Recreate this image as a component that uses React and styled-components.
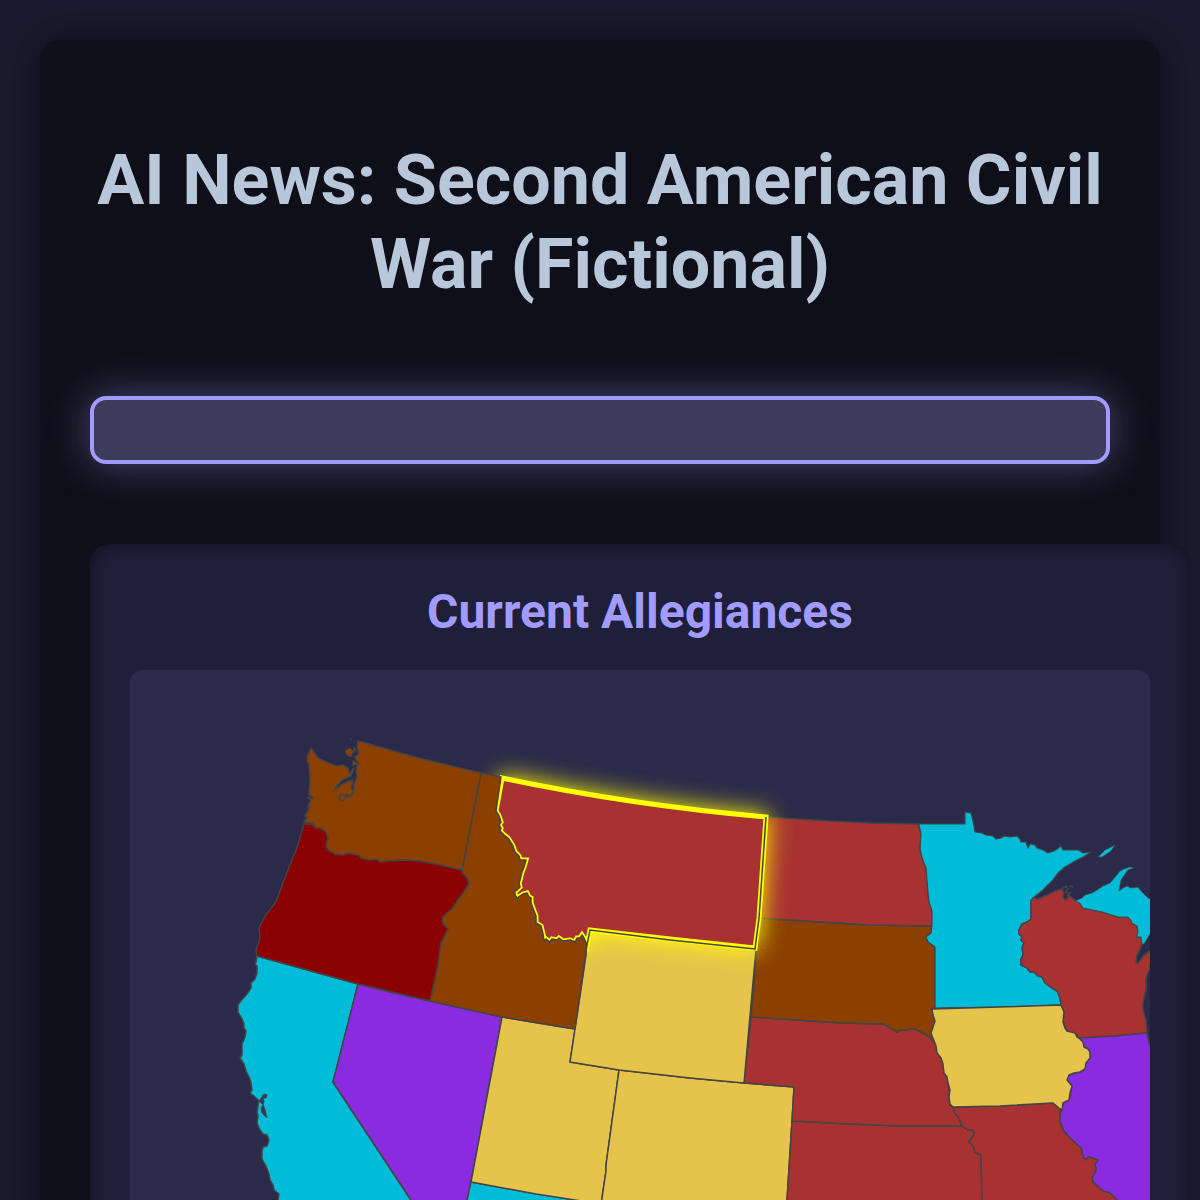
import React from "react";
import styled, { createGlobalStyle } from "styled-components";

const GlobalStyle = createGlobalStyle`
  body {
    margin: 0;
    padding: 40px;
    background: #1a1a2e;
    color: #b8c7d9;
    font-family: Roboto, "Liberation Sans", sans-serif;
  }
`;

const Container = styled.main`
  padding: 50px;
  border-radius: 20px;
  background: #0f0f1a;
  box-shadow: 0 0 40px rgba(0, 0, 0, 0.5);
`;

const Title = styled.h1`
  margin: 0;
  padding: 48px 0 90px;
  font-size: 70px;
  font-weight: 700;
  line-height: 84px;
  text-align: center;
`;

const Ticker = styled.div`
  box-sizing: border-box;
  min-height: 68px;
  margin-bottom: 80px;
  padding: 30px;
  border: 4px solid #a29bfe;
  border-radius: 16px;
  background: #3d3a5c;
  box-shadow: 0 0 40px rgba(162, 155, 254, 0.4);
`;

const MapPanel = styled.section`
  box-sizing: content-box;
  width: 100%;
  padding: 40px;
  border-radius: 20px;
  background: #1f1f3a;
  box-shadow: inset 0 0 20px rgba(0, 0, 0, 0.5);
`;

const PanelTitle = styled.h2`
  margin: 0 0 30px;
  color: #a29bfe;
  font-size: 48px;
  font-weight: 700;
  line-height: 56px;
  text-align: center;
`;

const MapFrame = styled.div`
  overflow: hidden;
  border-radius: 12px;
  background: #2c2a4a;
`;

const MapSvg = styled.svg`
  display: block;
  width: 100%;
  height: auto;
`;

const State = styled.path`
  fill: ${(p) => p.$fill};
  stroke: #444444;
  stroke-width: ${(p) => p.$line || 1.5};
  stroke-linejoin: round;
`;

const ActiveState = styled(State)`
  stroke: #ffff00;
  stroke-width: 5;
  stroke-linejoin: miter;
  filter: drop-shadow(0 0 12px #ffff00);
`;

const Border = styled.path`
  fill: none;
  stroke: #444444;
  stroke-width: 1.5;
`;

const Water = styled.path`
  fill: #2c3a50;
  stroke: #444444;
  stroke-width: 1;
`;

const cyan = "#00bcd9";
const brown = "#8b4000";
const maroon = "#8b0000";
const red = "#a83232";
const gold = "#e6c44c";
const purple = "#8a2be2";

const lowerStates = [
  {
    id: "California",
    fill: cyan,
    d: "M257 956L256 962 255 964 257 966 257 973 255 979 251 983 251 988 247 994 240 1002 238 1005 238 1012 242 1019 244 1024 244 1028 246 1031 245 1037 242 1044 242 1055 240 1058 244 1064 246 1071 250 1079 251 1083 252 1090 250 1093 255 1097 259 1101 258 1106 257 1112 258 1117 257 1123 260 1130 263 1134 267 1135 269 1140 267 1146 263 1147 262 1151 262 1159 266 1166 269 1174 270 1180 273 1185 274 1190 279 1194 278 1200 280 1210 290 1232 310 1260 330 1280H450L460 1260 411 1200 333 1082 358 984Z",
  },
  { id: "Nevada", fill: purple, d: "M358 984L394 993 430 1001 502 1017 471 1182 466 1205 455 1226 448 1255 411 1200 333 1082Z" },
  { id: "Arizona", fill: cyan, d: "M471 1182L520 1191 601 1204 590 1280H450L455 1226 466 1205Z" },
  { id: "Utah", fill: gold, d: "M502 1017L538 1023 575 1029 570 1062 619 1070 606 1165 606 1171 601 1204 536 1194 471 1182Z" },
  { id: "Colorado", fill: gold, d: "M619 1070L690 1078 744 1083 794 1087 792 1121 787 1200 784 1280H590L606 1171 606 1165Z" },
  { id: "Kansas", fill: red, d: "M792 1121L850 1124 900 1126 962 1126 968 1130 973 1130 974 1134 969 1142 973 1146 975 1152 981 1155 982 1200 983 1280H784L787 1200Z" },
  { id: "Nebraska", fill: red, d: "M751 1017L797 1020 840 1023 884 1024 892 1029 897 1032 901 1030 915 1029 927 1035 934 1041 936 1046 937 1053 941 1058 943 1064 944 1073 947 1077 948 1083 949 1089 949 1097 950 1104 953 1107 955 1113 959 1118 962 1126 900 1126 850 1124 792 1121 794 1087 744 1083Z" },
  { id: "South Dakota", fill: brown, d: "M759 918L820 922 870 925 932 926 931 933 926 937 928 942 935 947 935 1008 932 1009 933 1015 935 1021 931 1033 934 1042 927 1035 915 1029 901 1030 897 1032 892 1029 884 1024 840 1023 797 1020 751 1017Z" },
  { id: "North Dakota", fill: red, d: "M766 817L830 821 870 823 919 824 919 829 921 834 920 848 922 858 926 868 927 878 928 893 929 902 932 911 932 926 870 925 820 922 759 918Z" },
  {
    id: "Minnesota",
    fill: cyan,
    line: 1.2,
    d: "M919 824H965V812L971 813 973 821 975 832 982 833 986 835 993 836 996 839 1001 838 1004 836 1010 837 1017 836 1020 839 1021 842 1026 842 1028 848 1030 844 1035 845 1037 848 1043 850 1048 853 1054 851 1057 849 1061 846 1063 850 1070 850 1079 850 1083 853 1091 852 1083 857 1075 861 1065 867 1058 873 1052 881 1043 890 1033 898 1031 901 1031 919 1027 922 1022 924 1019 930 1019 934 1022 937 1021 940 1024 943 1022 948 1023 955 1021 959 1021 965 1027 968 1030 972 1034 972 1038 976 1042 977 1045 983 1052 988 1057 991 1060 998 1061 1005 1000 1007 935 1008V947L928 942 926 937 931 933 932 926 932 911 929 902 928 893 926 868 922 858 920 848 921 834Z",
  },
  {
    id: "Wisconsin",
    fill: red,
    d: "M1033 898L1035 898 1038 899 1047 895 1055 891 1062 889 1064 893 1063 898 1066 900 1069 895 1073 899 1080 903 1083 908 1093 910 1103 912 1112 915 1119 917 1128 917 1131 920 1132 923 1137 926 1138 931 1137 937 1141 937 1142 944 1139 952 1137 955 1136 962 1138 963 1144 955 1152 950 1150 967 1146 978 1146 990 1143 1003 1143 1010 1146 1020 1147 1033 1115 1036 1079 1038 1075 1033 1067 1031 1063 1022 1064 1012 1061 1005 1060 998 1057 991 1052 988 1045 983 1042 977 1038 976 1034 972 1030 972 1027 968 1021 965 1021 959 1023 955 1022 948 1024 943 1021 940 1022 937 1019 934 1019 930 1022 924 1027 922 1031 919 1031 901Z",
  },
  {
    id: "Michigan",
    fill: cyan,
    line: 0.8,
    d: "M1075 901L1082 898 1085 895 1092 893 1097 890 1103 886 1110 883 1116 876 1120 871 1124 869 1130 867 1134 868 1128 870 1125 874 1121 880 1119 891 1123 888 1127 886 1131 888 1138 887 1141 891 1145 895 1148 898 1153 899 1160 925 1150 934 1147 939 1144 944 1142 944 1141 937 1137 937 1138 931 1137 926 1132 923 1131 920 1128 917 1119 917 1112 915 1103 912 1083 908 1080 903Z M1098 857L1105 850 1115 845 1111 851 1102 857Z",
  },
  { id: "Illinois", fill: purple, d: "M1079 1038L1115 1036 1147 1033 1149 1043 1155 1055V1240L1125 1210 1117 1200 1110 1193 1103 1191 1093 1182 1092 1178 1096 1170 1095 1164 1098 1160 1089 1157 1086 1160 1083 1157 1081 1148 1070 1138 1063 1130 1060 1121 1060 1114 1062 1110 1063 1103 1070 1098 1072 1086 1067 1080 1068 1075 1080 1072 1086 1063 1090 1056 1088 1049 1083 1046Z" },
  { id: "Missouri", fill: red, d: "M953 1107L1000 1106 1053 1103 1060 1109 1060 1121 1063 1130 1070 1138 1081 1148 1083 1157 1086 1160 1089 1157 1098 1160 1095 1164 1096 1170 1092 1178 1093 1182 1103 1191 1110 1193 1117 1200 1125 1210 1140 1225V1280H983L982 1200 981 1155 975 1152 973 1146 969 1142 974 1134 973 1130 968 1130 962 1126 959 1118 955 1113Z" },
  { id: "Iowa", fill: gold, d: "M932 1009L1000 1007 1061 1005 1064 1012 1063 1022 1065 1028 1067 1031 1075 1033 1077 1037 1080 1039 1083 1042 1084 1047 1088 1049 1090 1052 1090 1058 1086 1063 1085 1069 1080 1072 1074 1073 1069 1075 1067 1080 1072 1086 1070 1093 1069 1100 1063 1103 1062 1110 1059 1108 1053 1103 1000 1106 953 1107 950 1104 949 1097 950 1090 948 1083 947 1077 944 1073 943 1064 941 1058 937 1053 936 1046 931 1033 935 1021 933 1015Z" },
  { id: "Wyoming", fill: gold, d: "M590 929L670 940 756 949 744 1083 690 1078 619 1070 570 1062 575 1029Z" },
];

const upperStates = [
  {
    id: "Idaho",
    fill: brown,
    d: "M481 773L501 777 496 811 499 816 501 822 499 825 501 828 500 831 504 835 508 838 513 846 515 852 519 856 520 860 526 860 524 867 522 872 520 880 519 883 520 887 517 890 515 891 515 895 517 898 523 894 527 893 529 897 531 898 531 903 534 911 536 916 536 923 541 926 543 934 544 941 546 939 550 942 552 939 557 940 559 938 563 941 570 940 575 942 577 938 580 938 582 935 584 938 587 945 575 1029 538 1023 502 1017 430 1001 437 970 441 943 448 929 443 924 442 918 449 911 452 909 457 901 463 893 469 884 467 878 463 874 462 870Z",
  },
  {
    id: "Washington",
    fill: brown,
    d: "M311 748L314 752 318 758 324 761 331 764 337 766 343 765 348 768 349 774 354 768 351 776 342 780 336 787 334 791 341 785 349 781 353 780 351 788 353 792 350 797 347 794 345 799 342 801 339 798 341 794 346 796 349 797 353 794 354 784 357 777 356 771 358 763 355 757 359 754 357 747 358 741 419 758 481 773 462 870 440 865 420 861 401 860 387 861 380 862 377 859 369 860 361 858 358 855 348 853 343 855 335 854 328 850 326 846 328 838 325 831 320 828 316 828 312 823 304 822 307 818 305 816 309 809 308 806 311 800 308 798 313 798 309 794 310 780 309 765 307 760 308 755Z",
  },
  {
    id: "Oregon",
    fill: maroon,
    d: "M304 824H312L316 828 320 828 325 831 328 838 326 846 328 850 335 854 343 855 348 853 358 855 361 858 369 860 377 859 380 862 387 861 401 860 420 861 440 865 462 870 463 874 467 878 469 884 463 893 457 901 452 909 449 911 442 918 443 924 448 929 441 943 437 970 430 1001 358 984 257 956 256 950 260 938 259 928 265 916 276 902 283 883 291 862 297 848 301 834Z",
  },
];

function AllegianceMap() {
  return (
    <MapSvg viewBox="130 670 1020 600" role="img" aria-label="Current allegiances by state">
      {lowerStates.map((s) => (
        <State key={s.id} $fill={s.fill} $line={s.line} d={s.d} />
      ))}
      <ActiveState
        $fill={red}
        d="M502 778Q630 805 766 817L759 918 755 948 670 939 590 930 587 945 584 938 582 935 580 938 577 938 575 942 570 940 563 941 559 938 557 940 552 939 550 942 546 939 544 941 543 934 541 926 536 923 536 916 534 911 531 903 531 898 529 897 527 893 523 894 517 898 515 895 515 891 517 890 520 887 519 883 520 880 522 872 524 867 526 860 520 860 519 856 515 852 513 846 508 838 504 835 500 831 501 828 499 825 501 822 499 816 496 811Z"
      />
      {upperStates.map((s) => (
        <State key={s.id} $fill={s.fill} d={s.d} />
      ))}
      {/* Eastern and southern edges of Montana */}
      <Border d="M766 817L759 918 755 949 670 940 590 930 587 945" />
      {/* San Francisco Bay */}
      <Water d="M259 1101L262 1097 264 1094 267 1095 266 1098 263 1098 264 1102 263 1104 265 1110 267 1118 262 1113 261 1108 263 1105Z" />
      {/* San Juan Islands */}
      <State $fill={brown} $line={1} d="M345 751L350 748 353 751 351 757 347 755Z M354 747L356 750 354 753Z M353 760L357 764 353 766Z M350 740L352 739" />
      {/* Apostle Islands */}
      <Border d="M1062 889L1066 886 1068 889 1065 892 1070 894 M1069 886L1073 887 M1067 896L1071 892" />
      {/* Coastal bays of Washington */}
      <Water d="M309 794L313 798 309 799Z M308 806L310 807 308 812Z" />
    </MapSvg>
  );
}

export default function App() {
  return (
    <>
      <GlobalStyle />
      <Container>
        <Title>AI News: Second American Civil War (Fictional)</Title>
        <Ticker role="status" />
        <MapPanel>
          <PanelTitle>Current Allegiances</PanelTitle>
          <MapFrame>
            <AllegianceMap />
          </MapFrame>
        </MapPanel>
      </Container>
    </>
  );
}
